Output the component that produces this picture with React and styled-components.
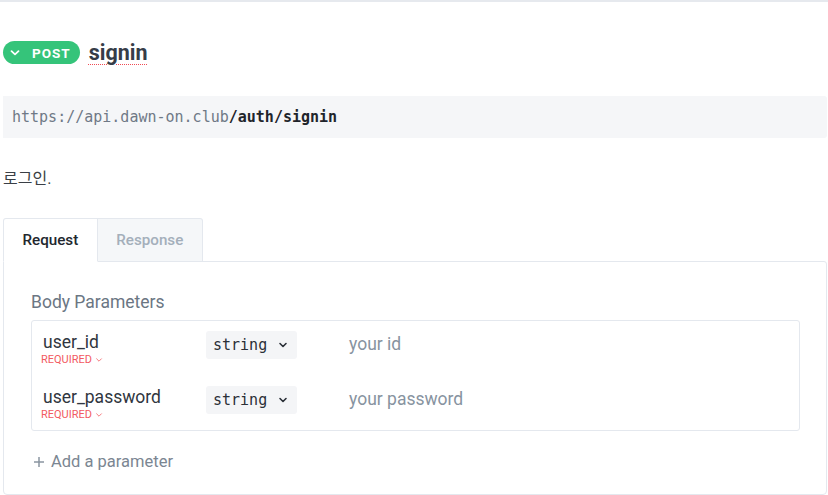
import React from "react"
import styled, { createGlobalStyle } from "styled-components"

const GlobalStyle = createGlobalStyle`
  body {
    margin: 0;
    background: #fff;
    font-family: Roboto, "Noto Sans CJK KR", sans-serif;
    color: #333a44;
  }
`

const TopRule = styled.div`
  height: 2px;
  background: #e6e9ee;
`

const Page = styled.div`
  padding: 0 1px 0 3px;
`

const Header = styled.div`
  display: flex;
  align-items: center;
  gap: 9px;
  margin-top: 39px;
  height: 23px;
`

const MethodBadge = styled.span`
  display: inline-flex;
  align-items: center;
  gap: 12px;
  height: 23px;
  padding: 0 9px 0 7px;
  border-radius: 12px;
  background: #35c47a;
  color: #fff;
  font-size: 13.5px;
  font-weight: 700;
  letter-spacing: 1px;
`

const Title = styled.h2`
  margin: 0;
  font-size: 21.5px;
  font-weight: 700;
  color: #363d48;
  text-decoration-line: underline;
  text-decoration-style: dotted;
  text-decoration-color: #ef4b55;
  text-decoration-thickness: 1px;
  text-underline-offset: 4px;
`

const UrlBox = styled.div`
  margin-top: 32px;
  height: 42px;
  display: flex;
  align-items: center;
  padding-left: 9px;
  background: #f5f6f8;
  border-radius: 0 3px 3px 0;
  font-family: "DejaVu Sans Mono", monospace;
  font-size: 15px;
  color: #6f7986;
`

const UrlPath = styled.span`
  color: #1f242b;
  font-weight: 700;
`

const Description = styled.p`
  margin: 30px 0 0;
  font-size: 16px;
  color: #3a3f46;
  line-height: 22px;
`

const Tabs = styled.div`
  display: flex;
  margin-top: 28px;
`

const Tab = styled.div`
  height: 42px;
  display: flex;
  align-items: center;
  padding: 0 18.5px;
  font-size: 15.2px;
  font-weight: 500;
  border: 1px solid #e4e8ee;
  border-bottom: ${(p) => (p.$active ? "1px solid #fff" : "1px solid #e4e8ee")};
  border-left: ${(p) => (p.$active ? "1px solid #e4e8ee" : "none")};
  border-radius: ${(p) => (p.$active ? "3px 0 0 0" : "0 3px 0 0")};
  background: ${(p) => (p.$active ? "#fff" : "#f5f7f9")};
  color: ${(p) => (p.$active ? "#22272e" : "#a4afbb")};
  margin-bottom: -1px;
  position: relative;
  z-index: 1;
`

const Panel = styled.div`
  border: 1px solid #e4e8ee;
  border-radius: 0 3px 4px 4px;
  padding: 30px 26px 20px 27px;
  height: 182px;
`

const SectionLabel = styled.div`
  font-size: 17.5px;
  color: #6b7683;
  line-height: 20px;
  margin-bottom: 8px;
`

const ParamTable = styled.div`
  border: 1px solid #e4e8ee;
  border-radius: 3px;
  padding-top: 7px;
`

const ParamRow = styled.div`
  display: grid;
  grid-template-columns: 165px 134px 1fr;
  align-items: start;
  height: 55px;
  padding-left: 9px;
  &:last-child {
    height: 47px;
  }
`

const NameCell = styled.div`
  display: flex;
  flex-direction: column;
  padding-top: 4px;
`

const ParamName = styled.span`
  font-size: 17.5px;
  color: #303640;
  line-height: 20px;
  padding-left: 2px;
`

const Required = styled.span`
  display: inline-flex;
  align-items: center;
  gap: 3px;
  font-size: 11px;
  color: #f25a5f;
  line-height: 12px;
  margin-top: 2px;
`

const TypeSelect = styled.div`
  width: 91px;
  height: 28px;
  box-sizing: border-box;
  display: flex;
  align-items: center;
  justify-content: space-between;
  padding: 0 9px 0 7px;
  margin-top: 3px;
  background: #f4f5f7;
  border-radius: 3px;
  font-family: "DejaVu Sans Mono", monospace;
  font-size: 15px;
  color: #2b3038;
`

const Placeholder = styled.span`
  font-size: 17.5px;
  color: #8793a0;
  line-height: 20px;
  padding-top: 6px;
  padding-left: 9px;
`

const AddParam = styled.div`
  display: flex;
  align-items: center;
  gap: 6px;
  margin-top: 21px;
  padding-left: 2px;
  font-size: 16.5px;
  color: #7b8692;
`

const Chevron = ({ size = 10, color = "currentColor", width = 1.6 }) => (
  <svg width={size} height={size} viewBox="0 0 10 10" fill="none">
    <path d="M2 3.5 L5 6.5 L8 3.5" stroke={color} strokeWidth={width} strokeLinecap="round" strokeLinejoin="round" />
  </svg>
)

const BadgeChevron = () => (
  <svg width="10" height="10" viewBox="0 0 10 10" fill="none">
    <path d="M1.5 3.2 L5 6.4 L8.5 3.2" stroke="#fff" strokeWidth="1.8" strokeLinecap="round" strokeLinejoin="round" />
  </svg>
)

const Plus = () => (
  <svg width="12" height="12" viewBox="0 0 12 12" fill="none">
    <path d="M6 1v10M1 6h10" stroke="#8a95a1" strokeWidth="1.5" />
  </svg>
)

const params = [
  { name: "user_id", placeholder: "your id" },
  { name: "user_password", placeholder: "your password" },
]

export default function App() {
  return (
    <>
      <GlobalStyle />
      <TopRule />
      <Page>
        <Header>
          <MethodBadge>
            <BadgeChevron />
            POST
          </MethodBadge>
          <Title>signin</Title>
        </Header>
        <UrlBox>
          https://api.dawn-on.club<UrlPath>/auth/signin</UrlPath>
        </UrlBox>
        <Description>로그인.</Description>
        <Tabs>
          <Tab $active>Request</Tab>
          <Tab>Response</Tab>
        </Tabs>
        <Panel>
          <SectionLabel>Body Parameters</SectionLabel>
          <ParamTable>
            {params.map((p) => (
              <ParamRow key={p.name}>
                <NameCell>
                  <ParamName>{p.name}</ParamName>
                  <Required>
                    REQUIRED
                    <Chevron size={8} width={1} />
                  </Required>
                </NameCell>
                <TypeSelect>
                  string
                  <Chevron size={10} width={1.6} />
                </TypeSelect>
                <Placeholder>{p.placeholder}</Placeholder>
              </ParamRow>
            ))}
          </ParamTable>
          <AddParam>
            <Plus />
            Add a parameter
          </AddParam>
        </Panel>
      </Page>
    </>
  )
}
